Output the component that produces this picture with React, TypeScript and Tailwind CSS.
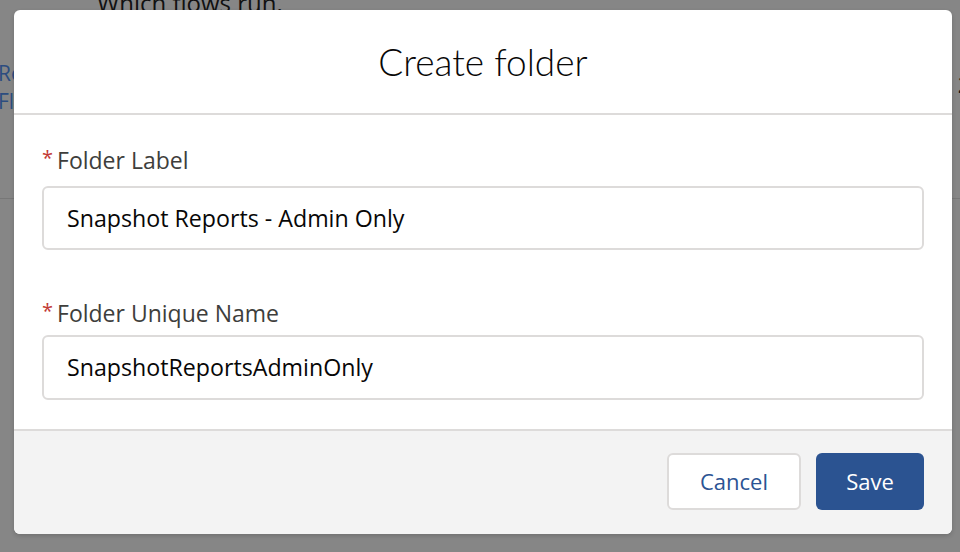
export default function App() {
  return (
    <div
      className="relative w-[960px] h-[552px] overflow-hidden bg-[#868686]"
      style={{ fontFamily: "'Open Sans', Lato, sans-serif" }}
    >
      {/* page behind the overlay */}
      <div className="pl-[97px] -mt-[12px] text-[24px] leading-[30px] text-[#111]">Which flows run.</div>
      <div className="flex justify-between mt-[41px]">
        <div className="-ml-[2px] text-[21px] leading-[28px] text-[#2c4d80]">
          <div>Re</div>
          <div>Flo</div>
        </div>
        <div className="mt-[12px] mr-[-10px] text-[21px] leading-[28px] font-semibold text-[#111]">2</div>
      </div>
      <div className="mt-[83px] h-px bg-[#777]" />

      {/* modal */}
      <div className="absolute left-[14px] top-[10px] w-[938px] h-[524px] flex flex-col rounded-[6px] bg-white overflow-hidden shadow-[0_2px_4px_rgba(0,0,0,0.16)]">
        <div className="h-[105px] shrink-0 flex items-center justify-center border-b-2 border-[#dddbda]">
          <h2 className="text-[37px] font-light text-[#080707]" style={{ fontFamily: "Lato, sans-serif" }}>
            Create folder
          </h2>
        </div>

        <div className="flex-1 px-[28px] pt-[31px] flex flex-col">
          <label className="flex items-center text-[23px] leading-[28px] text-[#3e3e3c]">
            <span className="text-[#c23934] mr-[4px] mt-[-4px] text-[20px]">*</span>Folder Label
          </label>
          <div className="mt-[12px] h-[64px] flex items-center px-[23px] rounded-[6px] border-2 border-[#dddbda] text-[23.2px] text-[#080707]">
            Snapshot Reports - Admin Only
          </div>

          <label className="mt-[49px] flex items-center text-[23px] leading-[28px] text-[#3e3e3c]">
            <span className="text-[#c23934] mr-[4px] mt-[-4px] text-[20px]">*</span>Folder Unique Name
          </label>
          <div className="mt-[8px] h-[65px] flex items-center px-[23px] rounded-[6px] border-2 border-[#dddbda] text-[23.2px] text-[#080707]">
            SnapshotReportsAdminOnly
          </div>
        </div>

        <div className="h-[105px] shrink-0 flex items-center justify-end gap-[15px] pr-[28px] pb-[2px] border-t-2 border-[#dddbda] bg-[#f3f3f3]">
          <button className="w-[134px] h-[57px] rounded-[6px] border-2 border-[#dddbda] bg-white text-[22px] text-[#2b5393]">
            Cancel
          </button>
          <button className="w-[108px] h-[57px] rounded-[6px] bg-[#2b5391] text-[22px] text-white">
            Save
          </button>
        </div>
      </div>
    </div>
  );
}
